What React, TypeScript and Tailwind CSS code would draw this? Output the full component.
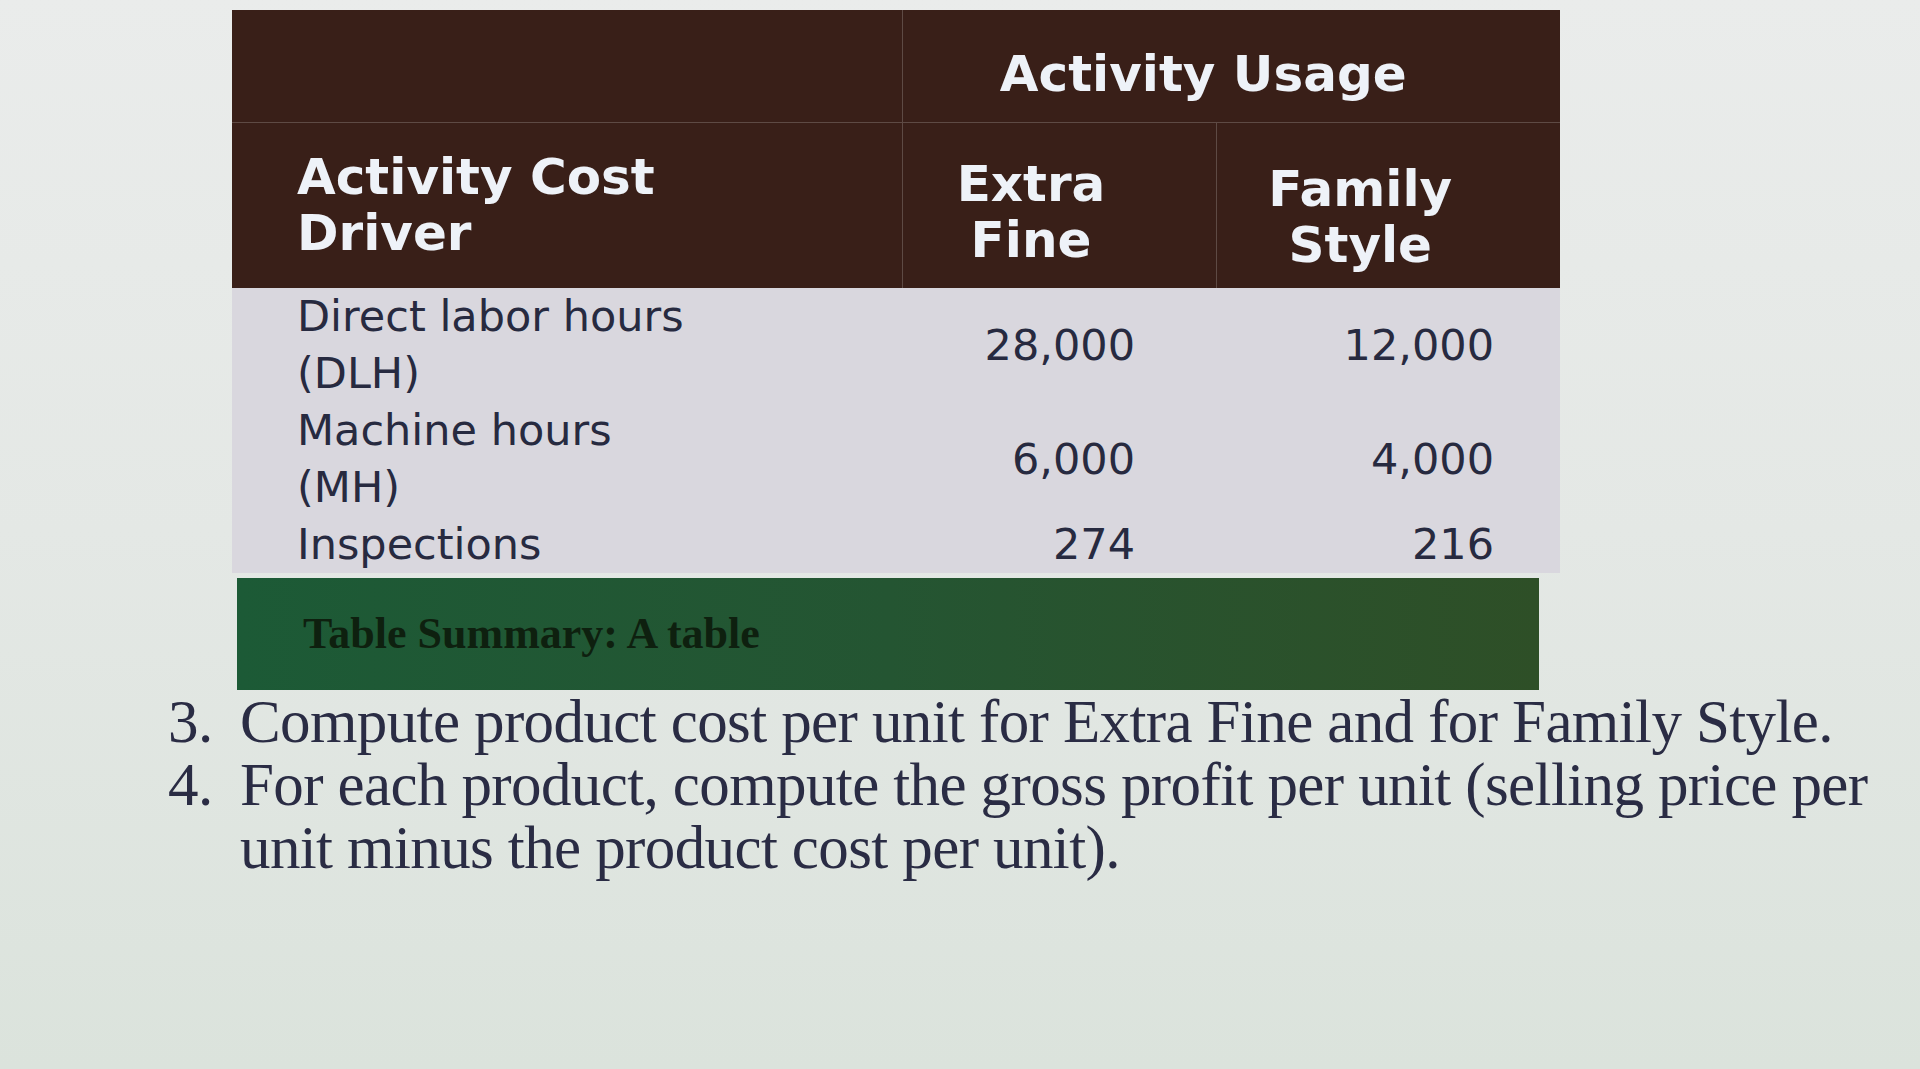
import React from 'react'

type Row = {
  driver: string[]
  extraFine: string
  familyStyle: string
}

const rows: Row[] = [
  { driver: ['Direct labor hours', '(DLH)'], extraFine: '28,000', familyStyle: '12,000' },
  { driver: ['Machine hours', '(MH)'], extraFine: '6,000', familyStyle: '4,000' },
  { driver: ['Inspections'], extraFine: '274', familyStyle: '216' },
]

const App = () => {
  return (
    <div className="min-h-screen w-full overflow-hidden bg-gradient-to-b from-[#eaeceb] via-[#e4e8e5] to-[#dbe3dc]">
      <div className="pl-[232px] pt-[10px]">
        <table className="w-[1328px] table-fixed border-collapse font-['DejaVu_Sans',sans-serif]">
          <colgroup>
            <col className="w-[670px]" />
            <col className="w-[314px]" />
            <col className="w-[344px]" />
          </colgroup>
          <thead className="bg-[#391f18] text-[#eef2f8] text-[50px] font-bold leading-[56px]">
            <tr className="h-[112px] border-b border-[#5e4a44]">
              <th className="p-0" />
              <th colSpan={2} className="border-l border-[#5e4a44] pt-[16px] pr-[56px] text-center align-middle">
                Activity Usage
              </th>
            </tr>
            <tr className="h-[166px]">
              <th className="pl-[65px] text-left align-middle">
                Activity Cost
                <br />
                Driver
              </th>
              <th className="border-l border-[#5e4a44] pt-[14px] pr-[56px] text-center align-middle">
                Extra
                <br />
                Fine
              </th>
              <th className="border-l border-[#5e4a44] pt-[24px] pr-[56px] text-center align-middle">
                Family
                <br />
                Style
              </th>
            </tr>
          </thead>
          <tbody className="bg-[#d9d7de] text-[#272a40] text-[43px] leading-[57px]">
            {rows.map((row) => (
              <tr key={row.driver[0]}>
                <td className="pl-[65px] align-middle">
                  {row.driver.map((line) => (
                    <div key={line}>{line}</div>
                  ))}
                </td>
                <td className="pr-[81px] text-right align-middle">{row.extraFine}</td>
                <td className="pr-[66px] text-right align-middle">{row.familyStyle}</td>
              </tr>
            ))}
          </tbody>
        </table>

        <div className="ml-[5px] mt-[5px] flex h-[112px] w-[1302px] items-center bg-gradient-to-r from-[#1c5a36] via-[#245532] to-[#2e4f27] pl-[66px]">
          <span className="font-['Liberation_Serif',serif] text-[44px] font-bold text-[#0e200f]">
            Table Summary: A table
          </span>
        </div>

        <ol className="-ml-[64px] font-['Liberation_Serif',serif] text-[61px] leading-[63px] tracking-[-0.01em] text-[#2a2c44]">
          <li className="flex">
            <span className="w-[72px] shrink-0">3.</span>
            <span className="whitespace-nowrap">
              Compute product cost per unit for Extra Fine and for Family Style.
            </span>
          </li>
          <li className="flex">
            <span className="w-[72px] shrink-0">4.</span>
            <div>
              <div className="whitespace-nowrap">
                For each product, compute the gross profit per unit (selling price per
              </div>
              <div className="whitespace-nowrap">unit minus the product cost per unit).</div>
            </div>
          </li>
        </ol>
      </div>
    </div>
  )
}

export default App
